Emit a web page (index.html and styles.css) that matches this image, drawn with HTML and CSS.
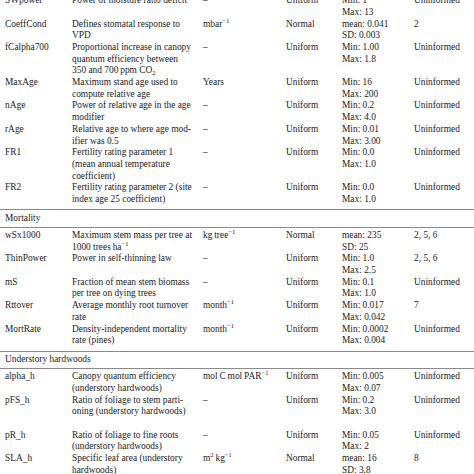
FILE: index.html
```html
<!DOCTYPE html>
<html>
<head>
<meta charset="utf-8">
<link rel="stylesheet" href="styles.css">
</head>
<body>
<div class="table">
  <div class="row">
    <div>SWpower</div><div>Power of moisture ratio deficit</div><div>–</div><div>Uniform</div><div>Min: 1<br>Max: 13</div><div>Uninformed</div>
  </div>
  <div class="row">
    <div>CoeffCond</div><div>Defines stomatal response to<br>VPD</div><div>mbar<sup>−1</sup></div><div>Normal</div><div>mean: 0.041<br>SD: 0.003</div><div>2</div>
  </div>
  <div class="row">
    <div>fCalpha700</div><div>Proportional increase in canopy<br>quantum efficiency between<br>350 and 700&#8201;ppm CO<sub>2</sub></div><div>–</div><div>Uniform</div><div>Min: 1.00<br>Max: 1.8</div><div>Uninformed</div>
  </div>
  <div class="row">
    <div>MaxAge</div><div>Maximum stand age used to<br>compute relative age</div><div>Years</div><div>Uniform</div><div>Min: 16<br>Max: 200</div><div>Uninformed</div>
  </div>
  <div class="row">
    <div>nAge</div><div>Power of relative age in the age<br>modifier</div><div>–</div><div>Uniform</div><div>Min: 0.2<br>Max: 4.0</div><div>Uninformed</div>
  </div>
  <div class="row">
    <div>rAge</div><div>Relative age to where age mod-<br>ifier was 0.5</div><div>–</div><div>Uniform</div><div>Min: 0.01<br>Max: 3.00</div><div>Uninformed</div>
  </div>
  <div class="row">
    <div>FR1</div><div>Fertility rating parameter 1<br>(mean annual temperature<br>coefficient)</div><div>–</div><div>Uniform</div><div>Min: 0.0<br>Max: 1.0</div><div>Uninformed</div>
  </div>
  <div class="row">
    <div>FR2</div><div>Fertility rating parameter 2 (site<br>index age 25 coefficient)</div><div>–</div><div>Uniform</div><div>Min: 0.0<br>Max: 1.0</div><div>Uninformed</div>
  </div>

  <div class="section">Mortality</div>

  <div class="row">
    <div>wSx1000</div><div>Maximum stem mass per tree at<br>1000 trees&#8201;ha<sup>−1</sup></div><div>kg&#8201;tree<sup>−1</sup></div><div>Normal</div><div>mean: 235<br>SD: 25</div><div>2, 5, 6</div>
  </div>
  <div class="row">
    <div>ThinPower</div><div>Power in self-thinning law</div><div>–</div><div>Uniform</div><div>Min: 1.0<br>Max: 2.5</div><div>2, 5, 6</div>
  </div>
  <div class="row">
    <div>mS</div><div>Fraction of mean stem biomass<br>per tree on dying trees</div><div>–</div><div>Uniform</div><div>Min: 0.1<br>Max: 1.0</div><div>Uninformed</div>
  </div>
  <div class="row">
    <div>Rttover</div><div>Average monthly root turnover<br>rate</div><div>month<sup>−1</sup></div><div>Uniform</div><div>Min: 0.017<br>Max: 0.042</div><div>7</div>
  </div>
  <div class="row">
    <div>MortRate</div><div>Density-independent mortality<br>rate (pines)</div><div>month<sup>−1</sup></div><div>Uniform</div><div>Min: 0.0002<br>Max: 0.004</div><div>Uninformed</div>
  </div>

  <div class="section">Understory hardwoods</div>

  <div class="row">
    <div>alpha_h</div><div>Canopy quantum efficiency<br>(understory hardwoods)</div><div>mol&#8201;C&#8201;mol&#8201;PAR<sup>−1</sup></div><div>Uniform</div><div>Min: 0.005<br>Max: 0.07</div><div>Uninformed</div>
  </div>
  <div class="row tall">
    <div>pFS_h</div><div>Ratio of foliage to stem parti-<br>oning (understory hardwoods)</div><div>–</div><div>Uniform</div><div>Min: 0.2<br>Max: 3.0</div><div>Uninformed</div>
  </div>
  <div class="row">
    <div>pR_h</div><div>Ratio of foliage to fine roots<br>(understory hardwoods)</div><div>–</div><div>Uniform</div><div>Min: 0.05<br>Max: 2</div><div>Uninformed</div>
  </div>
  <div class="row">
    <div>SLA_h</div><div>Specific leaf area (understory<br>hardwoods)</div><div>m<sup>2</sup>&#8201;kg<sup>−1</sup></div><div>Normal</div><div>mean: 16<br>SD: 3.8</div><div>8</div>
  </div>
</div>
</body>
</html>
```

FILE: styles.css
```css
html, body {
  margin: 0;
  padding: 0;
  background: #ffffff;
}

body {
  font-family: "Liberation Serif", "Times New Roman", serif;
  font-size: 9.4px;
  line-height: 11.7px;
  color: #222222;
  overflow: hidden;
}

.table {
  margin-top: -4.9px;
}

.row {
  display: grid;
  grid-template-columns: 67px 131px 83px 56px 72px 1fr;
  padding-left: 5px;
  white-space: nowrap;
}

.row.tall {
  padding-bottom: 11.7px;
}

.section {
  margin-top: 3.5px;
  margin-bottom: 2px;
  border-top: 1.5px solid #8a8a8a;
  border-bottom: 1.5px solid #8a8a8a;
  padding: 2.5px 0 2.5px 5px;
}

sup, sub {
  font-size: 6.6px;
  line-height: 0;
}

sup {
  vertical-align: 3.6px;
}

sub {
  vertical-align: -1.8px;
}
```
